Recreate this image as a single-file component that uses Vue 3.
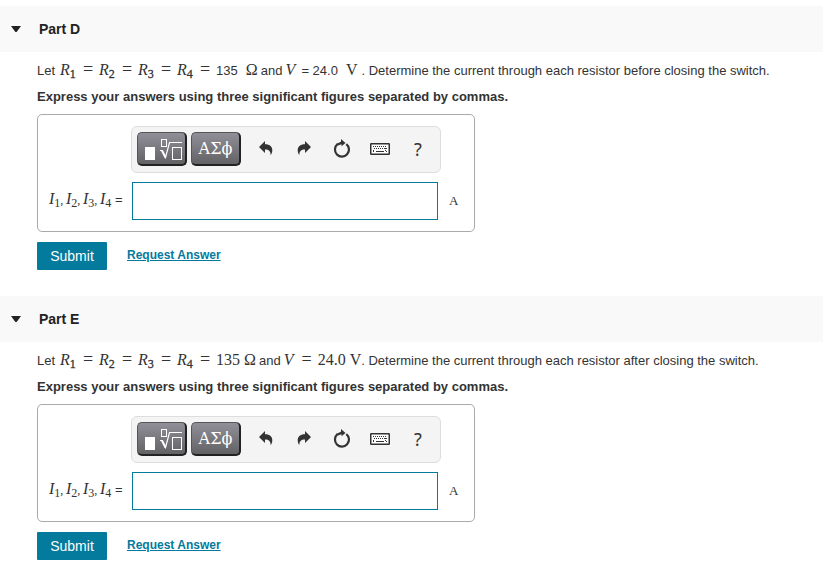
<script setup>
import { reactive } from 'vue'

const parts = reactive([
  { id: 'd', title: 'Part D', typeset: false, tail: '. Determine the current through each resistor before closing the switch.', open: true, answer: '' },
  { id: 'e', title: 'Part E', typeset: true, tail: '. Determine the current through each resistor after closing the switch.', open: true, answer: '' }
])
const indices = [1, 2, 3, 4]
</script>

<template>
  <main class="page">
    <section v-for="part in parts" :key="part.id" class="part">
      <h2 class="part-header">
        <button class="toggle" type="button" :aria-expanded="part.open" @click="part.open = !part.open">
          <svg class="caret" viewBox="0 0 10 6" aria-hidden="true"><path d="M0 0H10L6 5.4Q5 6.4 4 5.4Z" fill="#222" /></svg>
          <span>{{ part.title }}</span>
        </button>
      </h2>
      <div v-if="part.open" class="part-body">
        <p class="line question">
          <span class="let">Let</span>
          <template v-for="i in indices" :key="i">
            <span class="var"><i>R</i><sub>{{ i }}</sub></span><span class="rel">=</span>
          </template>
          <template v-if="part.typeset">
            <span class="num">135</span><span class="unit">Ω</span><span class="and">and</span><i class="volt">V</i><span class="rel">=</span><span class="num">24.0</span><span class="unit">V</span>
          </template>
          <template v-else>
            <span>135</span><span class="unit wide">Ω</span><span class="and near">and</span><i class="volt">V</i><span class="plain-eq">= 24.0</span><span class="unit wide spaced">V</span>
          </template>
          <span>{{ part.tail }}</span>
        </p>
        <p class="line instruction">Express your answers using three significant figures separated by commas.</p>

        <form :id="'form-' + part.id" class="answer-box" @submit.prevent>
          <div class="toolbar">
            <button type="button" class="tool dark" aria-label="Templates">
              <svg width="42" height="26" viewBox="0 0 42 26" fill="none" stroke="#fff" aria-hidden="true">
                <rect x="4" y="11" width="10" height="13" fill="#fff" stroke="none" />
                <rect x="20.500" y="3.500" width="5" height="7" />
                <path d="M19 14.500H21L24.500 21.500L28.500 6.500H41" stroke-width="1.200" />
                <path d="M21 14.500L24.500 21.500" stroke-width="2" />
                <rect x="31.500" y="11.500" width="9" height="12" />
              </svg>
            </button>
            <button type="button" class="tool dark greek" aria-label="Symbols">ΑΣϕ</button>
            <button type="button" class="tool icon first" aria-label="Undo">
              <svg width="14" height="16" viewBox="0 0 14 16" aria-hidden="true"><path d="M0 6L6 0V3.300C11 3.300 13.500 6 13.300 9.500C13.200 11.500 12.500 13 11.600 14.300C11.800 10.500 10 8.600 6 8.600V12Z" fill="#333" /></svg>
            </button>
            <button type="button" class="tool icon" aria-label="Redo">
              <svg width="14" height="16" viewBox="0 0 14 16" aria-hidden="true"><path d="M14 6L8 0V3.300C3 3.300 .5 6 .7 9.500C.8 11.500 1.500 13 2.400 14.300C2.200 10.500 4 8.600 8 8.600V12Z" fill="#333" /></svg>
            </button>
            <button type="button" class="tool icon" aria-label="Reset">
              <svg width="18" height="20" viewBox="0 0 18 20" aria-hidden="true"><path d="M4.500 5.200A7 7 0 1 0 13.300 5.100" fill="none" stroke="#333" stroke-width="2.200" /><path d="M8 0L12.500 3.900L8.500 7.200V5.300L5 6.500L3.500 4.800L8 2.800Z" fill="#333" /></svg>
            </button>
            <button type="button" class="tool icon" aria-label="Keyboard shortcuts">
              <svg width="20" height="12" viewBox="0 0 20 12" aria-hidden="true"><rect x=".75" y=".75" width="18.500" height="10.500" rx=".5" fill="#fff" stroke="#333" stroke-width="1.500" /><path d="M3 3.500H17M4 5.500H16M3 7.500H5M15 7.500H17" stroke="#333" stroke-dasharray="1 1" /><path d="M15 5.500H17M3 8.500H4M6 8.500H14M16 8.500H17" stroke="#333" /></svg>
            </button>
            <button type="button" class="tool icon help" aria-label="Help">?</button>
          </div>
          <label class="answer-label" :for="'answer-' + part.id">
            <span v-for="i in indices" :key="i" class="current"><i>I</i><sub>{{ i }}</sub><span v-if="i < 4">,</span></span><span class="label-eq">=</span>
          </label>
          <input :id="'answer-' + part.id" v-model="part.answer" class="answer" type="text" autocomplete="off" />
          <span class="amps">A</span>
        </form>
        <div class="actions">
          <button class="submit" type="submit" :form="'form-' + part.id">Submit</button>
          <a href="#" @click.prevent>Request Answer</a>
        </div>
      </div>
    </section>
  </main>
</template>

<style>
body { background: #fff; }
</style>

<style scoped>
* { box-sizing: border-box; }
button { margin: 0; padding: 0; border: 0; font: inherit; color: inherit; background: none; cursor: pointer; }
.page { padding: 6px 9px 0 0; font: 13px/20px "Liberation Sans", Arial, sans-serif; color: #333; }
.part-header { margin: 0; height: 46px; display: flex; align-items: center; background: #f9f9f9; font-size: 14px; color: #222; }
.toggle { display: flex; align-items: center; gap: 18px; padding-left: 11px; font-weight: bold; }
.caret { width: 10px; height: 6px; }
.part-body { padding: 8px 0 26px 37px; }
.line { margin: 0 0 7px; height: 20px; white-space: pre; }
.question { display: flex; align-items: baseline; }
.instruction { font-weight: bold; }
.let { margin-right: 5px; }
sub { line-height: 0; vertical-align: -3px; }
.var, .rel, .num, .unit, .volt { font-family: "Liberation Serif", "Times New Roman", serif; font-size: 16px; }
.var { width: 17px; }
.var sub { font-size: 12px; -webkit-text-stroke: 0.3px currentColor; }
.rel { width: 22px; font-size: 18px; text-align: center; line-height: 18px; }
.unit { margin-left: 4px; }
.wide { margin-left: 8px; }
.spaced { margin-right: 4px; }
.and { margin: 0 3px; }
.volt { width: 12px; }
.plain-eq { margin-left: 4px; }
.answer-box { width: 438px; max-width: 100%; padding: 11px 16px 11px 10px; display: grid; grid-template-columns: 84px 306px auto; row-gap: 9px; align-items: center; border: 1px solid #aaa; border-radius: 5px; }
.toolbar { grid-column: 2 / 4; width: 310px; height: 47px; margin-left: -1px; padding: 0 0 1px 5px; display: flex; align-items: center; background: #f4f4f4; border: 1px solid #ddd; border-radius: 6px; }
.tool { display: flex; align-items: center; justify-content: center; flex: none; }
.dark { width: 50px; height: 34px; margin-right: 4px; color: #fff; background: linear-gradient(#918f98, #626265); border: 1px solid #555; border-right: 2px solid #222; border-bottom: 2px solid #222; border-radius: 5px; }
.greek { font: 16px/24px "DejaVu Serif", serif; }
.icon { width: 38px; height: 34px; }
.first { margin-left: 2px; }
.help { font: 18px/24px "Noto Sans", sans-serif; }
.answer-label { padding: 0 0 4px 1px; display: flex; align-items: baseline; font-family: "Liberation Serif", serif; font-size: 16px; }
.current { width: 17px; white-space: nowrap; }
.current sub { font-size: 12px; }
.current span { font-size: 12px; }
.label-eq { margin-left: -2px; font-family: "Liberation Sans", sans-serif; font-size: 13px; }
.answer { width: 306px; height: 38px; padding: 0 8px; border: 1px solid #047a9c; border-radius: 0; font: inherit; background: #fff; }
.amps { margin-left: 11px; font-family: "Liberation Serif", serif; font-size: 13px; }
.actions { margin-top: 10px; display: flex; align-items: center; gap: 20px; }
.submit { width: 70px; height: 28px; color: #fff; background: #047a9c; font-size: 14px; border-radius: 1px; }
.actions a { padding-bottom: 2px; color: #047a9c; font-size: 12px; font-weight: bold; text-decoration: underline; }
</style>
